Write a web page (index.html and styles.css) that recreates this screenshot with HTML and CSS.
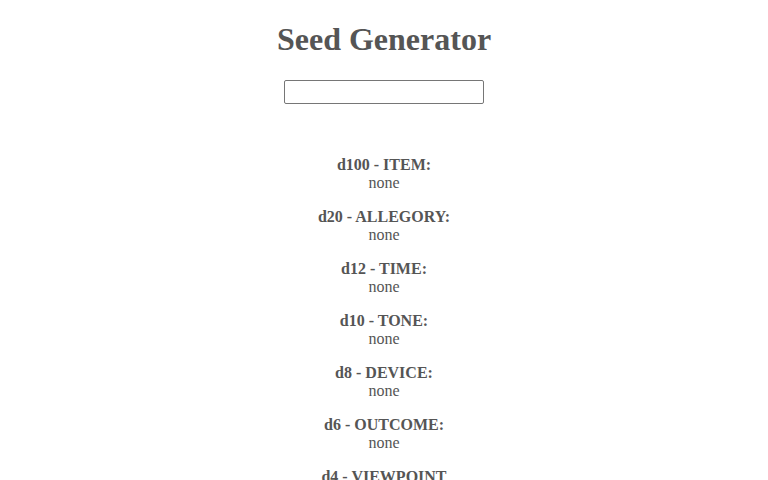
FILE: index.html
```html
<!DOCTYPE html>
<html>
<head>
<meta charset="utf-8">
<title>Seed Generator</title>
<link rel="stylesheet" href="styles.css">
</head>
<body>
<h1 class="title">Seed Generator</h1>
<div class="seed-row"><input class="seed-input" type="text"></div>
<div class="results">
  <div class="roll"><div class="label">d100 - ITEM:</div><div class="value">none</div></div>
  <div class="roll"><div class="label">d20 - ALLEGORY:</div><div class="value">none</div></div>
  <div class="roll"><div class="label">d12 - TIME:</div><div class="value">none</div></div>
  <div class="roll"><div class="label">d10 - TONE:</div><div class="value">none</div></div>
  <div class="roll"><div class="label">d8 - DEVICE:</div><div class="value">none</div></div>
  <div class="roll"><div class="label">d6 - OUTCOME:</div><div class="value">none</div></div>
  <div class="roll"><div class="label">d4 - VIEWPOINT</div><div class="value">none</div></div>
</div>
</body>
</html>
```
FILE: styles.css
```css
html, body {
  margin: 0;
  padding: 0;
  background: #fff;
}
body {
  font-family: "Liberation Serif", "Times New Roman", serif;
  font-size: 16px;
  color: #555;
  text-align: center;
}
.title {
  font-size: 32px;
  font-weight: bold;
  margin: 21.44px 0;
  line-height: 37px;
}
.seed-row {
  display: flex;
  justify-content: center;
}
.seed-input {
  box-sizing: border-box;
  width: 200px;
  height: 24px;
  margin: 0;
  border: 1px solid #767676;
  border-radius: 2px;
  padding: 1px 2px;
  font-family: "Liberation Serif", serif;
  font-size: 16px;
  background: #fff;
}
.results {
  padding-top: 52px;
}
.roll {
  margin-bottom: 16px;
  line-height: 18px;
}
.label {
  font-weight: bold;
}
```
